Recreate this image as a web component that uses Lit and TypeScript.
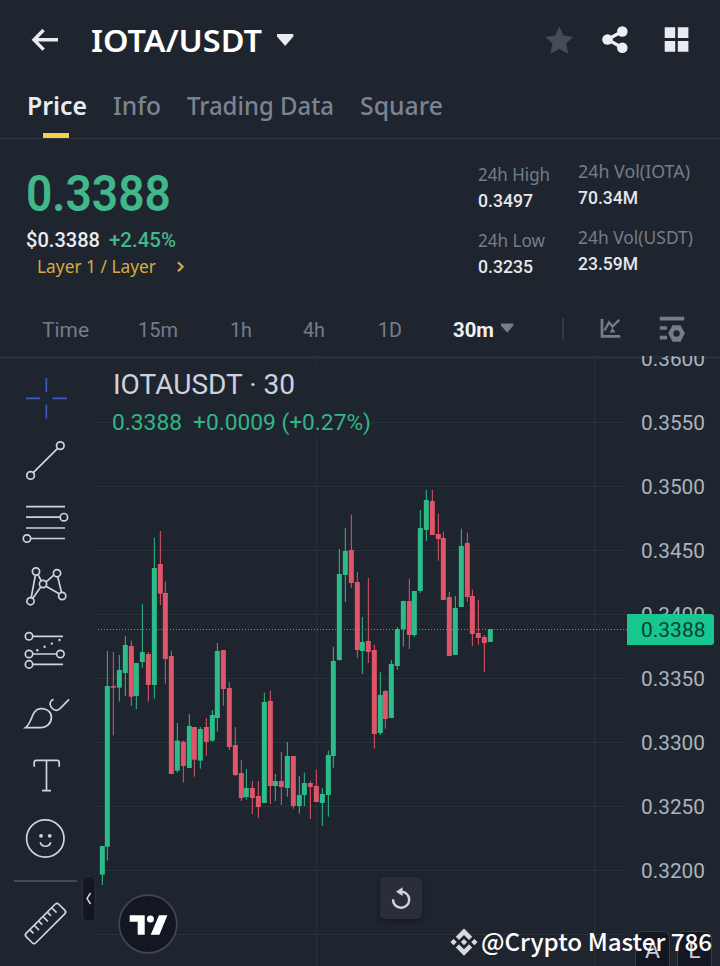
import { LitElement, html, svg, css } from "lit";
import { customElement } from "lit/decorators.js";

type Bar = [number, number, number, number, number, 0 | 1];
interface Block { x: number; y: number; bars: Bar[] }

// Each bar: centre, wick top, body top, body bottom, wick bottom, rising.
// Values are thirds of a pixel, relative to the block's origin.
const BLOCKS: Block[] = [
  { x: 95, y: 520, bars: [
    [22,978,978,1064,1095,1],[37,393,498,980,1022,1],[55,396,498,503,646,0],[73,405,450,503,545,1],
    [91,348,375,459,528,1],[109,362,378,530,558,0],[124,429,429,528,567,1],[142,252,396,426,443,1],
    [160,396,402,495,545,0],[178,53,144,495,536,1],[196,33,132,221,255,0],[211,185,219,417,491,0],
    [229,392,408,762,762,0],[247,609,662,752,758,1],[265,662,665,738,788,0],[283,582,618,744,744,1],
    [298,621,621,719,770,0],[316,621,627,722,746,1],[334,594,621,666,707,0],[352,570,585,662,665,1],
    [367,369,393,594,635,1],[385,390,390,507,558,0],[403,486,504,681,690,0],[421,621,675,765,768,0],
    [439,720,759,834,843,0]] },
  { x: 225, y: 500, bars: [
    [64,807,864,891,899,1],[82,843,864,894,942,0],[100,843,888,921,954,0],[118,578,606,909,909,1],
    [136,572,603,858,912,0],[151,822,843,858,903,1],[169,756,843,861,915,0],[187,726,768,864,890,1],
    [205,768,768,918,926,0],[223,828,885,918,941,1],[238,818,849,885,918,1],[256,843,849,861,957,0],
    [274,810,858,906,906,0],[292,865,882,909,978,1],[310,752,765,885,950,1],[325,440,483,768,803,1],
    [343,147,222,480,482,1],[361,84,153,225,306,1],[379,44,150,249,264,0],[397,216,246,450,474,0],
    [412,351,426,453,522,1],[430,234,423,456,489,0]] },
  { x: 360, y: 480, bars: [
    [43,494,510,762,806,0],[61,576,645,759,765,1],[76,630,633,717,746,0],[94,540,552,714,714,1],
    [112,441,447,558,570,1],[130,362,363,447,500,1],[148,296,363,465,507,0],[163,333,333,465,471,1],
    [181,90,144,333,339,1],[199,30,60,150,183,1],[217,30,63,165,165,0],[235,101,162,177,242,0],
    [250,155,174,360,360,0],[268,336,351,528,528,0],[286,348,384,525,525,1],[304,146,198,381,381,1],
    [322,158,189,351,366,0],[337,329,348,462,498,0],[355,360,459,474,494,0],[373,465,471,489,575,0],
    [391,447,447,486,486,1]] },
];

const PRICES = ["0.3600","0.3550","0.3500","0.3450","0.3400","0.3350","0.3300","0.3250","0.3200"];
const GRID_Y = [422.3, 486.4, 550.4, 614.4, 678.4, 742.5, 806.5, 870.6, 934.9];

// One line of text fitted to a fixed advance width.
const line = (text: string, w: number, h: number, base: number, cls: string) => html`
  <svg class="line" width=${w} height=${h}>
    <text class=${cls} x="0" y=${base} textLength=${w} lengthAdjust="spacingAndGlyphs">${text}</text>
  </svg>`;

const TOOLS = [
  svg`<g class="blue"><path d="M46.3 378V392M46.3 404.8V418.5M26 398.3H40M52.5 398.3H67"/></g>`,
  svg`<circle cx="60.3" cy="445.6" r="3.8"/><circle cx="30.6" cy="475.4" r="3.8"/><path d="M57.6 448.3L33.3 472.7"/>`,
  svg`<path d="M26 506.7H65M26 517.2H60M26 528H65M31 538.5H65"/><circle cx="63.9" cy="517.2" r="3.7"/><circle cx="27" cy="538.5" r="3.7"/>`,
  svg`<path d="M35.4 575L31.2 597.6M38 574.6L41.2 580.8M46.2 581.9L53.8 575.2M57.7 576.8L61.5 592.3M46 586.3L59.2 593.7M40.7 587L32.8 598.3"/>
    <circle cx="36" cy="571.5" r="3.6"/><circle cx="57" cy="573.2" r="3.6"/><circle cx="43" cy="584" r="3.6"/>
    <circle cx="30.5" cy="601.2" r="3.6"/><circle cx="62.2" cy="596" r="3.6"/>`,
  svg`<path d="M33 636.3H63M33 654H56.5M33 664.4H63"/><circle cx="29" cy="636.3" r="3.7"/><circle cx="29" cy="654" r="3.7"/>
    <circle cx="60.4" cy="654" r="3.7"/><circle cx="29" cy="664.4" r="3.7"/>
    <g class="dots"><circle cx="37.3" cy="650.3" r="1.2"/><circle cx="44.6" cy="646.8" r="1.2"/><circle cx="51.8" cy="643.6" r="1.2"/><circle cx="59.5" cy="640" r="1.2"/></g>`,
  svg`<path d="M25.5 727.6C33 722 31 709.5 40.5 708.6C47 708 51.6 712.3 51.4 717.6C51.2 723.5 46.5 727.6 40.5 727.6Z"/>
    <path d="M53.6 699.4C50 700.5 49 704 51.3 707.2C54.5 711.3 57.5 711.3 60.5 708.2L69 699.4"/>`,
  svg`<path d="M34.2 766.8V762.5Q34.2 760.4 36.5 760.4H57Q59.2 760.4 59.2 762.5V766.8M46.5 760.4V790.6M42 790.6H51"/>`,
  svg`<circle cx="45.3" cy="838.5" r="18.7"/><path d="M40.2 842.2C41.8 847.6 49 847.6 50.8 842.2"/>
    <g class="dots"><circle cx="41" cy="835.8" r="1.9"/><circle cx="49.7" cy="835.8" r="1.9"/></g>`,
];

@customElement("app-root")
export class AppRoot extends LitElement {
  static styles = css`
    :host { display: block; width: 720px; height: 966px; overflow: hidden; background: #1f252f; font-family: Roboto, "Noto Sans", sans-serif; }
    svg { display: block; flex: none; }
    .line { overflow: visible; }
    .pair { font: 600 30px "Noto Sans", sans-serif; fill: #fff; }
    .tab { font: 500 24.5px "Noto Sans", sans-serif; fill: #7b8391; }
    .tab.on { font-weight: 600; fill: #eaecef; }
    .big { font: 600 49.5px Roboto, sans-serif; fill: #40b889; }
    .usd { font: 500 20.5px Roboto, sans-serif; fill: #eaecef; }
    .chg { font: 500 20.5px Roboto, sans-serif; fill: #40b889; }
    .tag { font: 400 18px "Noto Sans", sans-serif; fill: #d8ac3c; }
    .lab { font: 400 18px "Noto Sans", sans-serif; fill: #757d8a; }
    .val { font: 500 18.3px Roboto, sans-serif; fill: #e4e7ec; }
    .per { font: 400 20px Roboto, sans-serif; fill: #757d8a; }
    .per.on { font-weight: 700; fill: #eef0f3; }
    .sym { font: 400 28px Roboto, sans-serif; fill: #cfd2db; }
    .quote { font: 400 21.3px Roboto, sans-serif; fill: #33b582; }
    .price { font: 400 20.8px Roboto, sans-serif; fill: #aeb2bd; }
    .now { font: 400 20.8px Roboto, sans-serif; fill: #0b3f30; }
    .mark { font: 500 24px "Noto Sans CJK SC", sans-serif; fill: #fff; }

    .head { display: flex; align-items: center; height: 80px; padding: 0 28px 0 30px; }
    .back { margin-right: 31px; }
    .caret { margin-left: 14px; }
    .acts { display: flex; margin-left: auto; gap: 24px; }
    .share { margin-right: 5px; }
    .tabs { display: flex; height: 58px; padding-left: 27px; border-bottom: 1px solid #2f3641; position: relative; }
    .tabs .line + .line { margin-left: 26px; }
    .bar { position: absolute; left: 43px; bottom: 0; width: 26px; height: 5.5px; background: #f1d04b; }
    .stats { display: flex; height: 162px; }
    .main { width: 478px; padding: 27px 0 0 26px; box-sizing: border-box; }
    .row { display: flex; align-items: center; }
    .row.usdrow { gap: 9px; }
    .row.tagrow { padding-left: 11px; gap: 20px; }
    .col { width: 100px; padding-top: 22px; }
    .col.b { width: 130px; padding-top: 19px; }
    .col .line:nth-child(2) { margin-bottom: 14px; }
    .periods { display: flex; height: 55px; border-bottom: 3px solid #292f39; padding-left: 42px; align-items: flex-start; }
    .periods .line { margin-top: 14px; }
    .g1 { margin-left: 49px; } .g2 { margin-left: 51.5px; } .g3 { margin-left: 51.5px; } .g4 { margin-left: 53px; } .g5 { margin-left: 51px; }
    .pi { margin-left: 5px; }

    .chart { display: flex; position: relative; height: 607px; clip-path: inset(-3px 0 0 0); }
    .tools { width: 97px; padding-top: 7px; flex: none; }
    .tool { fill: none; stroke: #cfd3dc; stroke-width: 1.7; }
    .blue { stroke: #3c5bc4; }
    .dots { fill: #cfd3dc; stroke: none; }
    .sep { stroke: #444954; stroke-width: 2; }
    .plot { flex: none; }
    .grid { stroke: #2a313b; stroke-width: 1; }
    .cur { stroke: #4aa98b; stroke-width: 1; stroke-dasharray: 1 2; }
    .up { fill: #2cbc8a; } .down { fill: #df5569; }
    .axis { padding-left: 14px; margin-top: -33.5px; }
    .ov { position: absolute; }
    .title { left: 112px; top: 4px; background: #1f252f; padding: 0 0 4px 1px; }
    .quotes { display: flex; gap: 10.5px; margin-left: -1px; }
    .nowbox { left: 627px; top: 255px; width: 87px; height: 31px; border-radius: 0 3px 3px 0; background: #17c78f; padding-left: 14px; box-sizing: border-box; }
    .handle { left: 82px; top: 517px; }
    .logo { left: 118px; top: 535px; }
    .reset { left: 380px; top: 518px; width: 42px; height: 42px; border-radius: 5px; background: #2a2e39; box-shadow: 0 2px 5px rgba(0,0,0,.35); }
    .key { top: 572px; width: 35px; height: 50px; box-sizing: border-box; border: 1px solid #363b46; border-radius: 7px; background: #131722; color: #c9ccd6; font: 400 23px/37px Roboto, sans-serif; text-align: center; }
    .ka { left: 635px; } .kl { left: 677px; }
    .water { left: 450px; top: 567px; display: flex; gap: 3px; }
  `;

  render() {
    return html`
      <div class="head">
        <svg class="back" width="30" height="30" viewBox="30 25 30 30"><path d="M43.6 30L34 39.8L43.6 49.6M34.5 39.8H58" fill="none" stroke="#e7eaef" stroke-width="3.4"/></svg>
        ${line("IOTA/USDT", 171, 40, 32.3, "pair")}
        <svg class="caret" width="18" height="16" viewBox="276 32 18 16"><path d="M277 34H293.3V36.5L285.2 46L277 36.5Z" fill="#e7eaef"/></svg>
        <div class="acts">
          <svg width="32" height="32" viewBox="543 24 32 32"><path d="M559.3 27.5L563.2 36.1L572.4 37.2L565.6 43.6L567.6 53L559.3 48.4L551 53L553 43.6L546.2 37.2L555.4 36.1Z" fill="#434c5a" stroke="#434c5a" stroke-linejoin="round"/></svg>
          <svg class="share" width="32" height="32" viewBox="599 24 32 32"><path d="M622 31.5L607.5 39.5L622 47.5" fill="none" stroke="#eceef2" stroke-width="3.2"/><g fill="#eceef2"><circle cx="607.5" cy="39.5" r="5.3"/><circle cx="622.3" cy="31.5" r="5.3"/><circle cx="622.3" cy="47.7" r="5.3"/></g></svg>
          <svg width="32" height="32" viewBox="660 24 32 32"><path d="M664.7 27.3H675.2V38H664.7ZM677.8 27.3H688.4V38H677.8ZM664.7 41H675.2V51.7H664.7ZM677.8 41H688.4V51.7H677.8Z" fill="#e9ebf0"/></svg>
        </div>
      </div>
      <div class="tabs">
        ${line("Price", 60, 50, 35, "tab on")}${line("Info", 48, 50, 35, "tab")}${line("Trading Data", 147, 50, 35, "tab")}${line("Square", 83, 50, 35, "tab")}
        <div class="bar"></div>
      </div>
      <div class="stats">
        <div class="main">
          ${line("0.3388", 145, 60, 44.5, "big")}
          <div class="row usdrow">${line("$0.3388", 74, 28, 21, "usd")}${line("+2.45%", 67, 28, 21, "chg")}</div>
          <div class="row tagrow">${line("Layer 1 / Layer", 119, 26, 19, "tag")}
            <svg width="10" height="14" viewBox="176 260 10 14"><path d="M178 262.3L182.6 266.8L178 271.3" fill="none" stroke="#d8ac3c" stroke-width="2.2"/></svg>
          </div>
        </div>
        <div class="col">
          ${line("24h High", 72, 26, 20, "lab")}${line("0.3497", 55, 26, 20, "val")}
          ${line("24h Low", 67, 26, 20, "lab")}${line("0.3235", 55, 26, 20, "val")}
        </div>
        <div class="col b">
          ${line("24h Vol(IOTA)", 112, 26, 20, "lab")}${line("70.34M", 60, 26, 20, "val")}
          ${line("24h Vol(USDT)", 115, 26, 20, "lab")}${line("23.59M", 60, 26, 20, "val")}
        </div>
      </div>
      <div class="periods">
        ${line("Time", 47, 30, 22, "per")}
        <div class="g1">${line("15m", 40, 30, 22, "per")}</div>
        <div class="g2">${line("1h", 22, 30, 22, "per")}</div>
        <div class="g3">${line("4h", 22, 30, 22, "per")}</div>
        <div class="g4">${line("1D", 24, 30, 22, "per")}</div>
        <div class="g5">${line("30m", 41, 30, 22, "per on")}</div>
        <svg class="pi" width="200" height="48" viewBox="499 301 200 48">
          <path d="M501 323.5H513.3V325.5L507.2 332.7L501 325.5Z" fill="#757d8a"/>
          <path d="M563 318V339.5" stroke="#39414d" stroke-width="1.5"/>
          <path d="M602 319V336.3H620.3" fill="none" stroke="#757d8a" stroke-width="2.8"/>
          <path d="M604.5 330.5L609 322.5L612.6 326.5L619.3 319.8" fill="none" stroke="#757d8a" stroke-width="2.3"/>
          <path d="M609.5 332.5L612.5 327.8L615.5 332.5Z" fill="#757d8a"/>
          <path d="M659.8 318.6H684.2M659.8 328H667M659.8 337.6H667" stroke="#757d8a" stroke-width="3.6"/>
          <path d="M672.5 325.2H680.5L684.9 333.3L680.5 341.7H672.5L668.2 333.3Z" fill="#757d8a"/>
          <circle cx="676.5" cy="333.5" r="3.2" fill="#1f252f"/>
        </svg>
      </div>
      <div class="chart">
        <div class="tools">
          ${TOOLS.map((t, i) => html`<svg class="tool" width="97" height="63" viewBox="0 ${366 + i * 63} 97 63">${t}</svg>`)}
          <svg class="tool" width="97" height="96" viewBox="0 870 97 96">
            <path class="sep" d="M14 881H77"/>
            <g transform="translate(45.5 923.5) rotate(-45)"><rect x="-23" y="-6.8" width="46" height="13.6" rx="2.6"/><path d="M-15.5 -6.8V-1.5M-9.3 -6.8V0.2M-3.1 -6.8V-1.5M3.1 -6.8V0.2M9.3 -6.8V-1.5M15.5 -6.8V0.2"/></g>
          </svg>
        </div>
        <svg class="plot" width="530" height="607" viewBox="97 359 530 607">
          <g class="grid">${GRID_Y.map(y => svg`<path d="M97 ${Math.floor(y) + 0.5}H627"/>`)}<path d="M316.5 359V966M594.5 359V966"/></g>
          ${BLOCKS.map(b => b.bars.map(([c, wt, bt, bb, wb, up]) => {
            const x = b.x + c / 3, y = (v: number) => b.y + v / 3;
            return svg`<g class=${up ? "up" : "down"}><rect x=${x - 0.5} y=${y(wt)} width="1" height=${(wb - wt) / 3}/><rect x=${x - 2.5} y=${y(bt)} width="5" height=${(bb - bt) / 3}/></g>`;
          }))}
          <path class="cur" d="M98 629.5H627"/>
        </svg>
        <div class="axis">${PRICES.map(p => line(p, 64, 64.08, 39.5, "price"))}</div>
        <div class="ov title">
          ${line("IOTAUSDT · 30", 182, 40, 31, "sym")}
          <div class="quotes">${line("0.3388", 70, 30, 27, "quote")}${line("+0.0009 (+0.27%)", 178, 30, 27, "quote")}</div>
        </div>
        <div class="ov nowbox">${line("0.3388", 64.5, 31, 23, "now")}</div>
        <svg class="ov handle" width="14" height="46" viewBox="82 876 14 46"><rect x="82.5" y="876.5" width="12.6" height="44.5" rx="5" fill="#131722" stroke="#2b303b"/><path d="M90.5 893L87 898.5L90.5 904" fill="none" stroke="#cfd3dc" stroke-width="1.5"/></svg>
        <svg class="ov logo" width="60" height="60" viewBox="118 894 60 60"><circle cx="148" cy="924" r="28.8" fill="#131722" stroke="#434651" stroke-width="1.7"/><g fill="#fff"><path d="M129.7 915.3H144.7V934.8H137.7V921.8H129.7ZM159 915.3H167.4L159.4 934.8H150.7Z"/><circle cx="150.4" cy="918.9" r="3.5"/></g></svg>
        <div class="ov reset"><svg width="42" height="42" viewBox="380 877 42 42"><path d="M393 899.3A8.1 8.1 0 1 0 401.5 891.6" fill="none" stroke="#cfd3dc" stroke-width="2.4"/><path d="M396 891.8L402.6 887.2V896Z" fill="#cfd3dc"/></svg></div>
        <div class="ov key ka">A</div><div class="ov key kl">L</div>
        <div class="ov water">
          <svg width="28" height="32" viewBox="450 926 28 32"><g fill="#d9dadc"><path d="M464 928.5L472.2 936.7L469 939.9L464 934.9L459 939.9L455.8 936.7ZM464 955.7L455.8 947.5L459 944.3L464 949.3L469 944.3L472.2 947.5ZM450.4 942.1L453.6 938.9L456.8 942.1L453.6 945.3ZM471.2 942.1L474.4 938.9L477.6 942.1L474.4 945.3ZM464 938.9L467.2 942.1L464 945.3L460.8 942.1Z"/></g></svg>
          ${line("@Crypto Master 786", 231, 32, 25, "mark")}
        </div>
      </div>`;
  }
}
